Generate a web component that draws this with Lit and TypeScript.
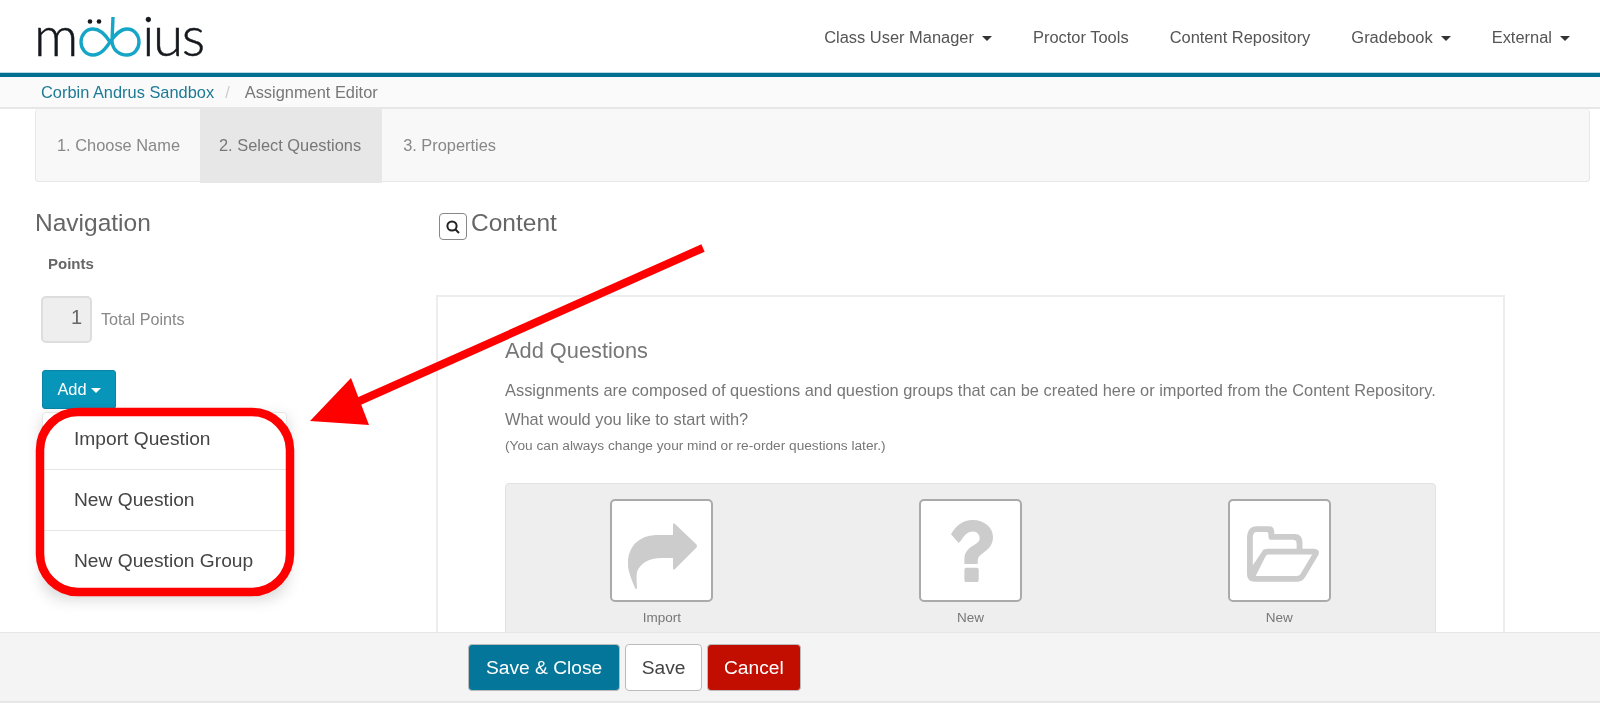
import { css, html, LitElement, svg } from "lit";
import { customElement } from "lit/decorators.js";

const shareIcon = svg`<path d="M7 65 C2 53 -1 45 0 37 C2 20 14 12 30 12 L45 12 L45 2 Q45 -1 47 1 L68 21 Q70 23 68 25 L47 46 Q45 48 45 45 L45 35 L34 35 C20 35 12 41 9 49 C8 55 9 61 9 65 Q8 67 7 65 Z"/>`;
const questionIcon = svg`<path d="M8 24 L0 15 C5 6 12 0 23 0 C34 0 44 7 44 18 C44 27 38 31 33 35 C30 37 28 39 28 43 L28 46 L14 46 L14 41 C14 34 18 30 23 27 C27 24 30 23 30 19 C30 15 27 12 23 12 C17 12 13 17 11 21 Z M14 52 Q14 50 16 50 L27 50 Q29 50 29 52 L29 62 Q29 65 27 65 L16 65 Q14 65 14 62 Z"/>`;
const folderIcon = svg`<path d="M3 16 Q3 3 13 3 L26 3 Q31 3 31 9 L31 11 L52 11 Q60 11 60 20 L60 26 L72 26 Q79 27 76 33 L63 55 Q60 60 55 60 L11 60 Q3 60 3 52 Z M9 43 L20 27 Q22 26 25 26 L54 26 L54 21 Q54 17 50 17 L28 17 Q25 17 25 13 L25 11 Q25 9 23 9 L13 9 Q9 9 9 15 Z M12 54 L54 54 Q57 54 58 52 L70 32 L25 32 Q23 32 22 34 Z" fill-rule="evenodd"/>`;

@customElement("app-root")
export class AppRoot extends LitElement {
    static override styles = css`
        :host {
            display: block;
            position: relative;
            width: 1600px;
            height: 724px;
            overflow: hidden;
            background: #fff;
            font-family: "Liberation Sans", Arial, sans-serif;
            color: #666;
            filter: blur(0.35px);
        }

        .topbar {
            height: 73px;
            display: flex;
            align-items: center;
            justify-content: space-between;
            border-bottom: 4px solid #036f91;
            box-shadow: inset 0 -1px 0 #bcd9e3;
            padding: 0 30px 0 34px;
        }

        .logo {
            display: flex;
            align-items: baseline;
            font-family: Lato, "Liberation Sans", sans-serif;
            font-weight: 300;
            font-size: 55px;
            line-height: 1;
            color: #15181c;
            -webkit-text-stroke: 0.5px #15181c;
            margin-top: -3px;
        }

        .logo .rest {
            letter-spacing: -1.5px;
        }

        .logo svg {
            width: 62px;
            height: 42px;
            margin: 0 1px 0 1px;
            overflow: visible;
        }

        .nav {
            display: flex;
            gap: 41px;
            font-size: 16.45px;
            color: #555;
            padding-top: 2px;
        }

        .nav span {
            display: flex;
            align-items: center;
            gap: 8px;
        }

        .caret {
            width: 0;
            height: 0;
            border-left: 5px solid transparent;
            border-right: 5px solid transparent;
            border-top: 5px solid #333;
            margin-top: 2px;
        }

        .crumbs {
            height: 30px;
            display: flex;
            align-items: center;
            gap: 11px;
            padding-left: 41px;
            background: #fafafa;
            border-bottom: 2px solid #e7e7e7;
            font-size: 16.4px;
            color: #777;
        }

        .crumbs a {
            color: #1d7a96;
        }

        .crumbs i {
            font-style: normal;
            color: #ccc;
            margin-right: 4px;
        }

        .steps {
            height: 72px;
            margin: 0 10px 0 35px;
            display: flex;
            background: #f8f8f8;
            border: 1px solid #e7e7e7;
            border-top: 0;
            border-radius: 4px;
            font-size: 16.4px;
            color: #888;
        }

        .steps div {
            padding: 27px 21px 0;
        }

        .steps div:first-child {
            padding-right: 20px;
        }

        .steps .active {
            height: 74px;
            box-sizing: border-box;
            padding: 27px 21px 0 19px;
            background: #e7e7e7;
            color: #777;
        }

        .main {
            height: 450px;
            display: grid;
            grid-template-columns: 436px 1069px;
            overflow: hidden;
        }

        .side {
            padding: 26px 0 0 35px;
        }

        h2 {
            margin: 0;
            font-size: 24.5px;
            font-weight: 400;
            line-height: 30px;
            color: #666;
        }

        .side h3 {
            margin: 16px 0 0 13px;
            font-size: 15px;
            line-height: 20px;
            font-weight: 700;
        }

        .total {
            display: flex;
            align-items: center;
            gap: 9px;
            margin: 22px 0 0 6px;
            font-size: 16.2px;
            color: #888;
        }

        .total b {
            box-sizing: border-box;
            width: 51px;
            height: 47px;
            padding: 0 8px 4px 0;
            display: flex;
            align-items: center;
            justify-content: flex-end;
            background: #eee;
            border: 2px solid #ddd;
            border-radius: 5px;
            font-weight: 400;
            font-size: 20px;
            color: #666;
        }

        .add {
            box-sizing: border-box;
            width: 74px;
            height: 39px;
            margin: 27px 0 0 7px;
            display: flex;
            align-items: center;
            justify-content: center;
            gap: 4px;
            background: #0795b9;
            border: 1px solid #0a84a4;
            border-radius: 3px;
            color: #fff;
            font-size: 16.4px;
        }

        .add .caret {
            border-top-color: #fff;
        }

        .content {
            padding-top: 26px;
            min-width: 0;
        }

        .content-title {
            display: flex;
            align-items: flex-start;
            gap: 4px;
            margin-left: 3px;
        }

        .search {
            box-sizing: border-box;
            width: 28px;
            height: 27px;
            display: flex;
            align-items: center;
            justify-content: center;
            border: 1px solid #888;
            border-radius: 4px;
            margin-top: 5px;
        }

        .panel {
            margin-top: 55px;
            height: 400px;
            box-sizing: border-box;
            border: 2px solid #ededed;
            padding: 41px 67px 0 67px;
        }

        .panel h4 {
            margin: 0;
            font-size: 21.8px;
            line-height: 26px;
            font-weight: 400;
            color: #777;
        }

        .panel p {
            margin: 12px 0 0;
            font-size: 16.4px;
            line-height: 29px;
            color: #777;
        }

        .panel small {
            display: block;
            font-size: 13.7px;
            line-height: 24px;
            color: #777;
        }

        .tiles {
            margin-top: 25px;
            height: 200px;
            display: grid;
            grid-template-columns: repeat(3, 1fr);
            padding: 15px 1.5px 0;
            background: #eee;
            border: 1px solid #e2e2e2;
            border-radius: 4px;
        }

        .tile {
            display: flex;
            flex-direction: column;
            align-items: center;
            gap: 8px;
            font-size: 13.5px;
            color: #777;
        }

        .tile div {
            box-sizing: border-box;
            width: 103px;
            height: 103px;
            display: flex;
            align-items: center;
            justify-content: center;
            background: #fff;
            border: 2px solid #aaa;
            border-radius: 5px;
        }

        .tile svg {
            fill: #ccc;
        }

        .tile .import {
            margin: 10px 0 0 3px;
        }

        .tile .question {
            margin: 2px 0 0 4px;
        }

        .tile .folder {
            margin: 6px 0 0 7px;
        }

        .footer {
            box-sizing: border-box;
            height: 71px;
            display: flex;
            align-items: center;
            gap: 4.5px;
            padding: 1px 0 0 468px;
            background: #f4f4f4;
            border-top: 1px solid #e7e7e7;
            border-bottom: 2px solid #e7e7e7;
        }

        .btn {
            box-sizing: border-box;
            height: 47px;
            display: flex;
            align-items: center;
            border-radius: 4px;
            font-size: 19.2px;
            padding: 0 17px;
            border: 1px solid #bbb;
        }

        .primary {
            background: #047699;
            color: #fff;
        }

        .plain {
            background: #fff;
            color: #444;
            padding: 0 16px;
        }

        .danger {
            background: #c10e00;
            color: #fff;
            padding: 0 16px;
        }

        .menu {
            position: absolute;
            left: 42px;
            top: 412px;
            width: 243px;
            height: 178px;
            background: #fff;
            border: 1px solid #e5e5e5;
            border-radius: 4px 4px 24px 24px;
            box-shadow: 0 6px 16px rgba(0, 0, 0, 0.18);
            font-size: 19.2px;
            color: #444;
        }

        .menu div {
            box-sizing: border-box;
            height: 61px;
            padding: 19px 0 0 31px;
            border-bottom: 1px solid #e5e5e5;
        }

        .menu div:first-child {
            height: 57px;
            padding-top: 15px;
        }

        .menu div:last-child {
            border-bottom: 0;
        }

        .marks {
            position: absolute;
            inset: 0;
            pointer-events: none;
        }
    `;

    override render() {
        return html`
            <header class="topbar">
                <div class="logo">
                    <span>m</span>
                    <svg viewBox="0 0 62 42" aria-hidden="true">
                        <path
                            d="M31 28 C26 20 20 15 14 15 C7 15 2 21 2 28 C2 35 7 41 14 41 C22 41 27 34 31 28 C36 21 41 15 48 15 C55 15 60 21 60 28 C60 35 55 41 48 41 C40 41 34 36 33 28 L34 3"
                            fill="none"
                            stroke="#15a5c7"
                            stroke-width="3.4"
                        />
                        <circle cx="11" cy="7.5" r="2.3" fill="#15181c" />
                        <circle cx="20" cy="7.5" r="2.3" fill="#15181c" />
                    </svg>
                    <span class="rest">ius</span>
                </div>
                <nav class="nav">
                    <span>Class User Manager <i class="caret"></i></span>
                    <span>Proctor Tools</span>
                    <span>Content Repository</span>
                    <span>Gradebook <i class="caret"></i></span>
                    <span>External <i class="caret"></i></span>
                </nav>
            </header>
            <div class="crumbs">
                <a>Corbin Andrus Sandbox</a><i>/</i><span>Assignment Editor</span>
            </div>
            <div class="steps">
                <div>1. Choose Name</div>
                <div class="active">2. Select Questions</div>
                <div>3. Properties</div>
            </div>
            <main class="main">
                <section class="side">
                    <h2>Navigation</h2>
                    <h3>Points</h3>
                    <div class="total"><b>1</b> Total Points</div>
                    <div class="add">Add <i class="caret"></i></div>
                </section>
                <section class="content">
                    <div class="content-title">
                        <span class="search">
                            <svg width="16" height="16" viewBox="0 0 16 16" fill="none" stroke="#222" stroke-width="2">
                                <circle cx="7" cy="7" r="4.6" />
                                <path d="M10.5 10.5 L14 14" />
                            </svg>
                        </span>
                        <h2>Content</h2>
                    </div>
                    <div class="panel">
                        <h4>Add Questions</h4>
                        <p>
                            Assignments are composed of questions and question groups that can be created here or imported from the Content Repository.<br />
                            What would you like to start with?
                        </p>
                        <small>(You can always change your mind or re-order questions later.)</small>
                        <div class="tiles">
                            <div class="tile">
                                <div><svg class="import" width="70" height="66" viewBox="0 0 70 66">${shareIcon}</svg></div>
                                Import
                            </div>
                            <div class="tile">
                                <div><svg class="question" width="43" height="63" viewBox="0 0 45 66">${questionIcon}</svg></div>
                                New
                            </div>
                            <div class="tile">
                                <div><svg class="folder" width="74" height="57" viewBox="2 2 76 58">${folderIcon}</svg></div>
                                New
                            </div>
                        </div>
                    </div>
                </section>
            </main>
            <footer class="footer">
                <span class="btn primary">Save &amp; Close</span>
                <span class="btn plain">Save</span>
                <span class="btn danger">Cancel</span>
            </footer>
            <div class="menu">
                <div>Import Question</div>
                <div>New Question</div>
                <div>New Question Group</div>
            </div>
            <svg class="marks" viewBox="0 0 1600 724" width="1600" height="724">
                <rect x="40" y="412" width="250" height="180" rx="38" fill="none" stroke="#fe0000" stroke-width="8.5" />
                <path d="M703 248 L355 403" stroke="#fe0000" stroke-width="8" fill="none" />
                <path d="M310 421 L351 378 L369 425 Z" fill="#fe0000" />
            </svg>
        `;
    }
}
